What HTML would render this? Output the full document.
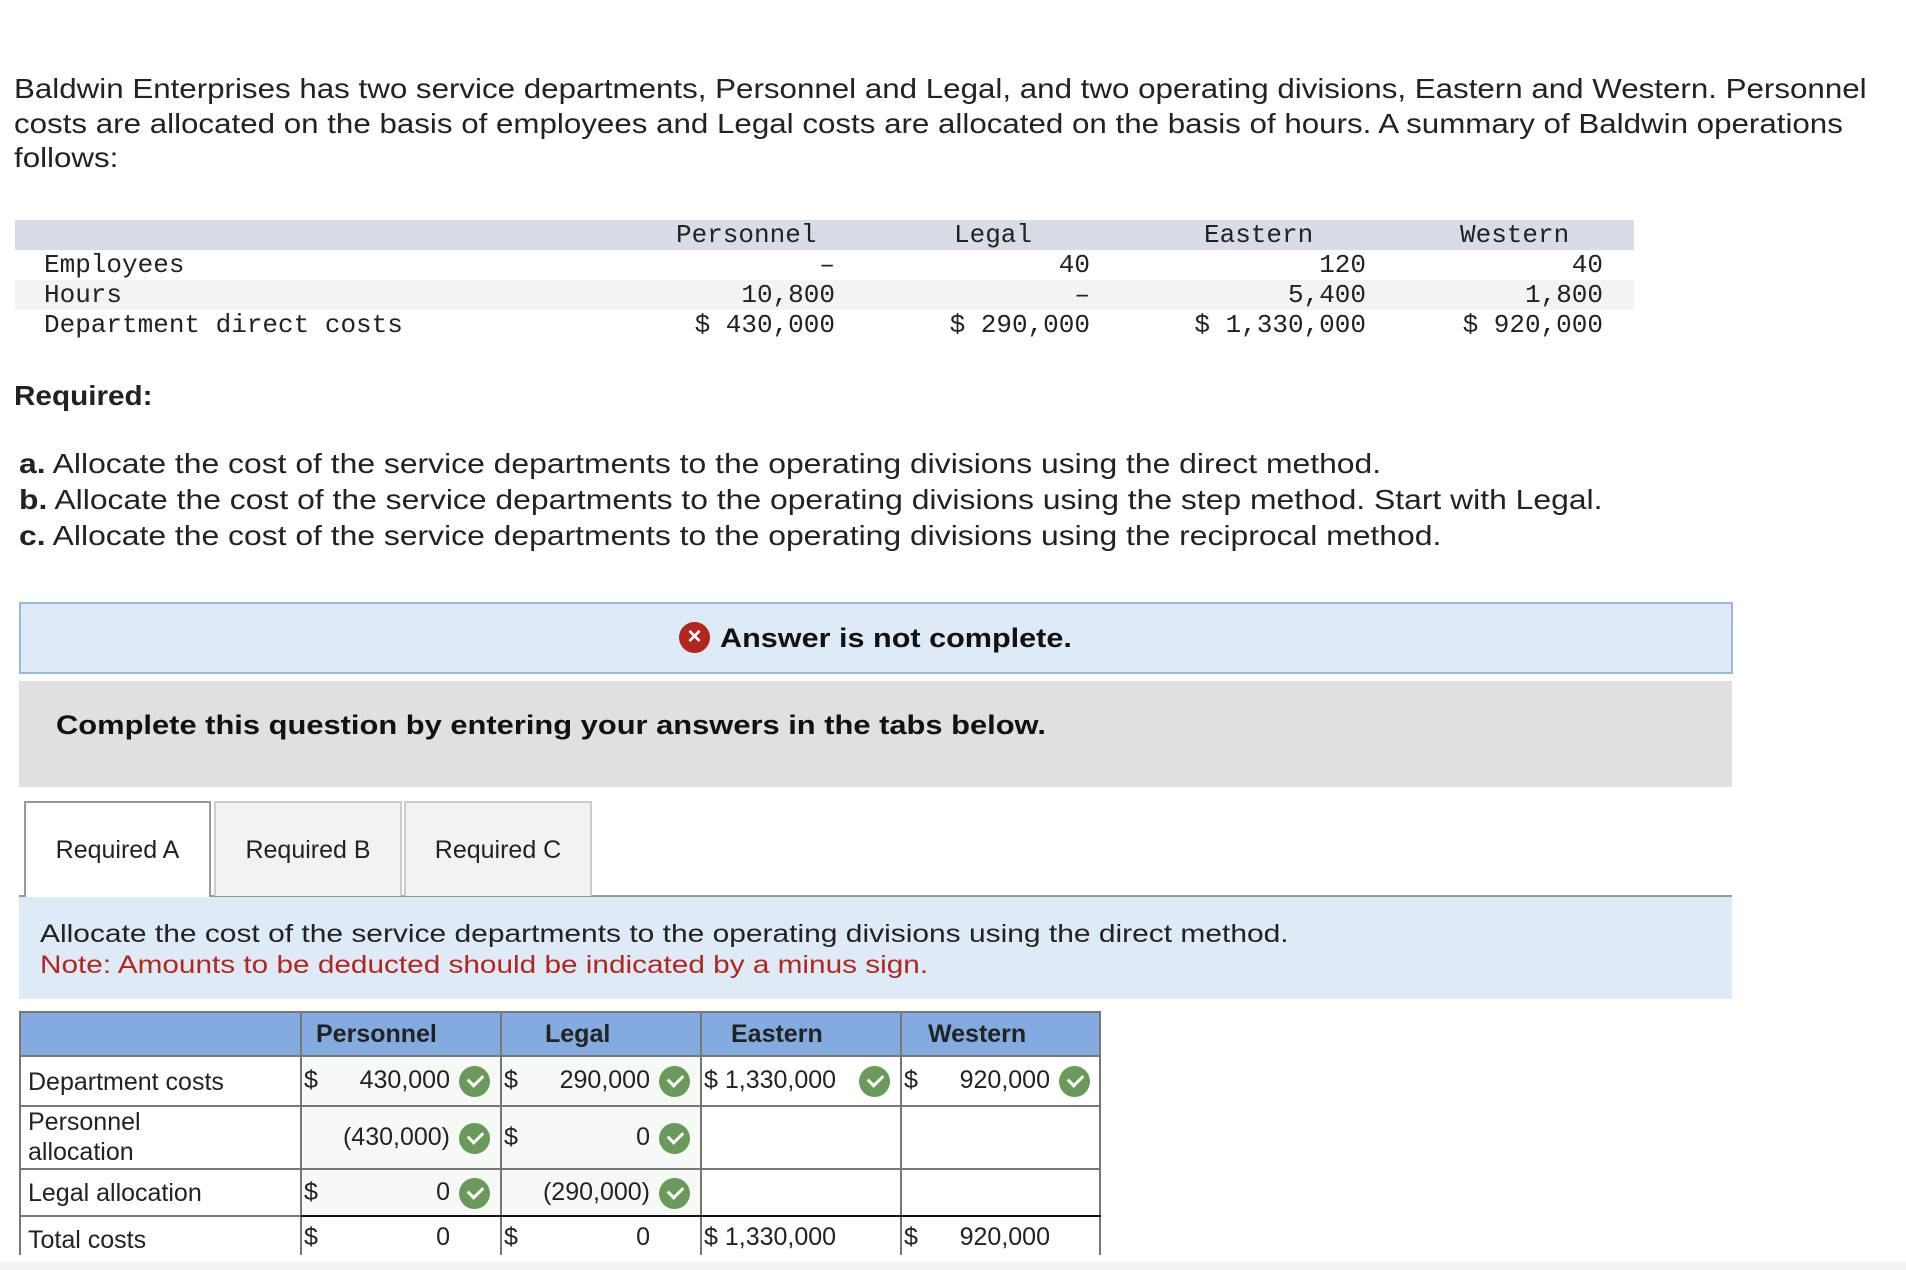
<!DOCTYPE html>
<html><head><meta charset="utf-8"><style>
body{margin:0;width:1906px;height:1270px;background:#fff;position:relative;overflow:hidden;font-family:"Liberation Sans",sans-serif;color:#222}
.a{position:absolute;white-space:nowrap}
.p{font-size:28px;line-height:34px;left:14px;transform-origin:0 0}
.mono{font-family:"Liberation Mono",monospace;font-size:26px;color:#222}
.r{text-align:right}
.chk{display:inline-block;width:31px;height:31px;border-radius:50%;background:#6a9a5b;position:absolute;top:50%;margin-top:-15px}
.chk:after{content:"";position:absolute;left:9px;width:12px;height:7px;border-left:3px solid #fff;border-bottom:3px solid #fff;transform:rotate(-45deg);top:8px}
.t{font-size:25px}
.sx{transform-origin:0 0}
</style></head><body>
<div class="a p" style="top:72px;transform:scaleX(1.118)">Baldwin Enterprises has two service departments, Personnel and Legal, and two operating divisions, Eastern and Western. Personnel</div>
<div class="a p" style="top:107px;transform:scaleX(1.118)">costs are allocated on the basis of employees and Legal costs are allocated on the basis of hours. A summary of Baldwin operations</div>
<div class="a p" style="top:141px;transform:scaleX(1.118)">follows:</div>

<div class="a" style="left:15px;top:220px;width:1619px;height:30px;background:#d8dce6"></div>
<div class="a" style="left:15px;top:280px;width:1619px;height:30px;background:#f3f3f3"></div>
<div class="a mono" style="left:676px;top:220px;line-height:30px">Personnel</div>
<div class="a mono" style="left:954px;top:220px;line-height:30px">Legal</div>
<div class="a mono" style="left:1204px;top:220px;line-height:30px">Eastern</div>
<div class="a mono" style="left:1460px;top:220px;line-height:30px">Western</div>
<div class="a mono" style="left:44px;top:250px;line-height:30px">Employees<br>Hours<br>Department direct costs</div>
<div class="a mono r" style="right:1071px;top:250px;line-height:30px">–<br>10,800<br>$ 430,000</div>
<div class="a mono r" style="right:816px;top:250px;line-height:30px">40<br>–<br>$ 290,000</div>
<div class="a mono r" style="right:540px;top:250px;line-height:30px">120<br>5,400<br>$ 1,330,000</div>
<div class="a mono r" style="right:303px;top:250px;line-height:30px">40<br>1,800<br>$ 920,000</div>

<div class="a p" style="top:379px;font-weight:bold;transform:scaleX(1.06)">Required:</div>
<div class="a p" style="left:19px;top:447px;transform:scaleX(1.138)"><b>a.</b> Allocate the cost of the service departments to the operating divisions using the direct method.</div>
<div class="a p" style="left:19px;top:483px;transform:scaleX(1.138)"><b>b.</b> Allocate the cost of the service departments to the operating divisions using the step method. Start with Legal.</div>
<div class="a p" style="left:19px;top:519px;transform:scaleX(1.138)"><b>c.</b> Allocate the cost of the service departments to the operating divisions using the reciprocal method.</div>

<div class="a" style="left:19px;top:602px;width:1710px;height:68px;background:#dfeaf7;border:2px solid #9bb8e0"></div>
<div class="a" style="left:679px;top:622px;width:31px;height:31px;border-radius:50%;background:#b3261e;color:#fff;font-size:24px;line-height:30px;text-align:center;font-weight:bold">×</div>
<div class="a sx" style="left:720px;top:621px;font-size:27px;font-weight:bold;line-height:34px;color:#111;transform:scaleX(1.133)">Answer is not complete.</div>

<div class="a" style="left:19px;top:681px;width:1713px;height:106px;background:#e0e0e0"></div>
<div class="a sx" style="left:56px;top:708px;font-size:27px;font-weight:bold;line-height:34px;color:#111;transform:scaleX(1.143)">Complete this question by entering your answers in the tabs below.</div>

<div class="a" style="left:19px;top:895px;width:1713px;height:2px;background:#999"></div>
<div class="a" style="left:24px;top:801px;width:183px;height:96px;background:#fff;border:2px solid #999;border-bottom:none"></div>
<div class="a" style="left:214px;top:801px;width:184px;height:93px;background:#f2f2f2;border:2px solid #ccc;border-bottom:none"></div>
<div class="a" style="left:404px;top:801px;width:184px;height:93px;background:#f2f2f2;border:2px solid #ccc;border-bottom:none"></div>
<div class="a t" style="left:24px;width:187px;top:834px;line-height:32px;text-align:center">Required A</div>
<div class="a t" style="left:214px;width:188px;top:834px;line-height:32px;text-align:center">Required B</div>
<div class="a t" style="left:404px;width:188px;top:834px;line-height:32px;text-align:center">Required C</div>

<div class="a" style="left:19px;top:897px;width:1713px;height:102px;background:#dfeaf7"></div>
<div class="a t sx" style="left:40px;top:918px;line-height:32px;transform:scaleX(1.198)">Allocate the cost of the service departments to the operating divisions using the direct method.</div>
<div class="a t sx" style="left:40px;top:949px;line-height:32px;color:#b3261e;transform:scaleX(1.19)">Note: Amounts to be deducted should be indicated by a minus sign.</div>

<div class="a" style="left:19px;top:1011px;width:1082px;height:46px;background:#83abe0;border:2px solid #777;box-sizing:border-box"></div>
<div class="a" style="left:301px;top:1057px;width:400px;height:159px;background:#f7f9f6"></div>
<div class="a" style="left:19px;top:1011px;width:2px;height:244px;background:#777"></div>
<div class="a" style="left:300px;top:1011px;width:2px;height:244px;background:#777"></div>
<div class="a" style="left:500px;top:1011px;width:2px;height:244px;background:#777"></div>
<div class="a" style="left:700px;top:1011px;width:2px;height:244px;background:#777"></div>
<div class="a" style="left:900px;top:1011px;width:2px;height:244px;background:#777"></div>
<div class="a" style="left:1099px;top:1011px;width:2px;height:244px;background:#777"></div>
<div class="a" style="left:19px;top:1105px;width:1082px;height:2px;background:#777"></div>
<div class="a" style="left:19px;top:1168px;width:1082px;height:2px;background:#777"></div>
<div class="a" style="left:19px;top:1215px;width:282px;height:2px;background:#777"></div>
<div class="a" style="left:301px;top:1215px;width:800px;height:2px;background:#111"></div>
<div class="a" style="left:0;top:1262px;width:1906px;height:8px;background:#f3f3f3"></div>

<div class="a t" style="left:316px;top:1018px;font-weight:bold;line-height:32px">Personnel</div>
<div class="a t" style="left:545px;top:1018px;font-weight:bold;line-height:32px">Legal</div>
<div class="a t" style="left:731px;top:1018px;font-weight:bold;line-height:32px">Eastern</div>
<div class="a t" style="left:928px;top:1018px;font-weight:bold;line-height:32px">Western</div>

<div class="a t" style="left:28px;top:1066px;line-height:32px">Department costs</div>
<div class="a t" style="left:28px;top:1107px;line-height:30px">Personnel<br>allocation</div>
<div class="a t" style="left:28px;top:1177px;line-height:32px">Legal allocation</div>
<div class="a t" style="left:28px;top:1224px;line-height:32px">Total costs</div>

<div class="a" style="left:302px;top:1057px;width:198px;height:48px"><span class="a t" style="left:2px;top:9px">$</span><span class="a t" style="right:50px;top:9px">430,000</span><span class="chk" style="right:10px"></span></div>
<div class="a" style="left:502px;top:1057px;width:198px;height:48px"><span class="a t" style="left:2px;top:9px">$</span><span class="a t" style="right:50px;top:9px">290,000</span><span class="chk" style="right:10px"></span></div>
<div class="a" style="left:702px;top:1057px;width:198px;height:48px"><span class="a t" style="left:2px;top:9px">$ 1,330,000</span><span class="chk" style="right:10px"></span></div>
<div class="a" style="left:902px;top:1057px;width:198px;height:48px"><span class="a t" style="left:2px;top:9px">$</span><span class="a t" style="right:50px;top:9px">920,000</span><span class="chk" style="right:10px"></span></div>
<div class="a" style="left:302px;top:1107px;width:198px;height:61px"><span class="a t" style="right:50px;top:16px">(430,000)</span><span class="chk" style="right:10px"></span></div>
<div class="a" style="left:502px;top:1107px;width:198px;height:61px"><span class="a t" style="left:2px;top:16px">$</span><span class="a t" style="right:50px;top:16px">0</span><span class="chk" style="right:10px"></span></div>
<div class="a" style="left:302px;top:1170px;width:198px;height:45px"><span class="a t" style="left:2px;top:8px">$</span><span class="a t" style="right:50px;top:8px">0</span><span class="chk" style="right:10px"></span></div>
<div class="a" style="left:502px;top:1170px;width:198px;height:45px"><span class="a t" style="right:50px;top:8px">(290,000)</span><span class="chk" style="right:10px"></span></div>
<div class="a" style="left:302px;top:1217px;width:198px;height:38px"><span class="a t" style="left:2px;top:6px">$</span><span class="a t" style="right:50px;top:6px">0</span></div>
<div class="a" style="left:502px;top:1217px;width:198px;height:38px"><span class="a t" style="left:2px;top:6px">$</span><span class="a t" style="right:50px;top:6px">0</span></div>
<div class="a" style="left:702px;top:1217px;width:198px;height:38px"><span class="a t" style="left:2px;top:6px">$ 1,330,000</span></div>
<div class="a" style="left:902px;top:1217px;width:198px;height:38px"><span class="a t" style="left:2px;top:6px">$</span><span class="a t" style="right:50px;top:6px">920,000</span></div>
</body></html>
